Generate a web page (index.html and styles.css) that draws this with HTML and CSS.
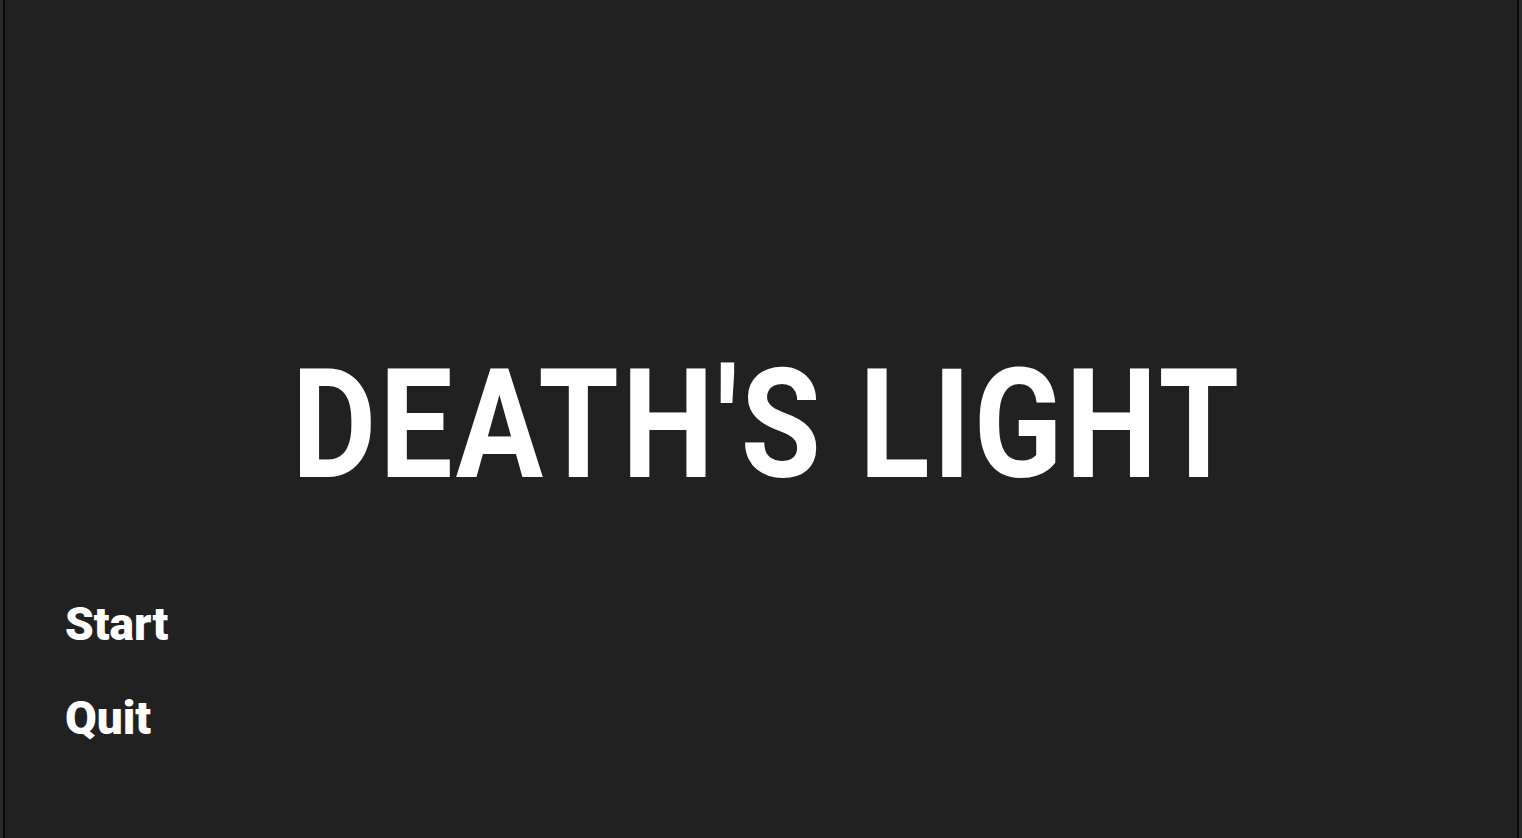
FILE: index.html
```html
<!DOCTYPE html>
<html lang="en">
<head>
  <meta charset="UTF-8">
  <title>Death's Light</title>
  <link rel="stylesheet" href="styles.css">
</head>
<body>
  <div class="frame">
    <main class="screen">
      <div class="title-wrap">
        <h1 class="title">DEATH'S LIGHT</h1>
      </div>
      <nav class="menu">
        <a href="#" class="menu__item">Start</a>
        <a href="#" class="menu__item">Quit</a>
      </nav>
    </main>
  </div>
</body>
</html>
```

FILE: styles.css
```css
/* ---------- base ---------- */
* {
  box-sizing: border-box;
  margin: 0;
  padding: 0;
}
html, body {
  height: 100%;
}
body {
  background: #2b2b2b;
  overflow: hidden;
}

/* ---------- window frame around the game canvas ---------- */
.frame {
  height: 100%;
  padding: 0 3px;
}
.screen {
  height: 100%;
  background: #212121;
  border-left: 2px solid #0a0a0a;
  border-right: 2px solid #0a0a0a;
  display: flex;
  flex-direction: column;
}

/* ---------- title ---------- */
.title-wrap {
  margin-top: 337px;
  display: flex;
  justify-content: center;
  padding-left: 12px;
}
.title {
  color: #fff;
  font-family: Roboto, "DejaVu Sans", sans-serif;
  font-weight: 700;
  font-size: 153px;
  line-height: 176px;
  letter-spacing: 3.6px;
  white-space: nowrap;
  transform: scaleX(0.85);
}

/* ---------- main menu ---------- */
.menu {
  margin-top: 83px;
  padding-left: 60px;
  display: flex;
  flex-direction: column;
  align-items: flex-start;
  gap: 38px;
}
.menu__item {
  color: #fff;
  text-decoration: none;
  font-family: Roboto, "DejaVu Sans", sans-serif;
  font-weight: 900;
  font-size: 46px;
  line-height: 56px;
}
```
